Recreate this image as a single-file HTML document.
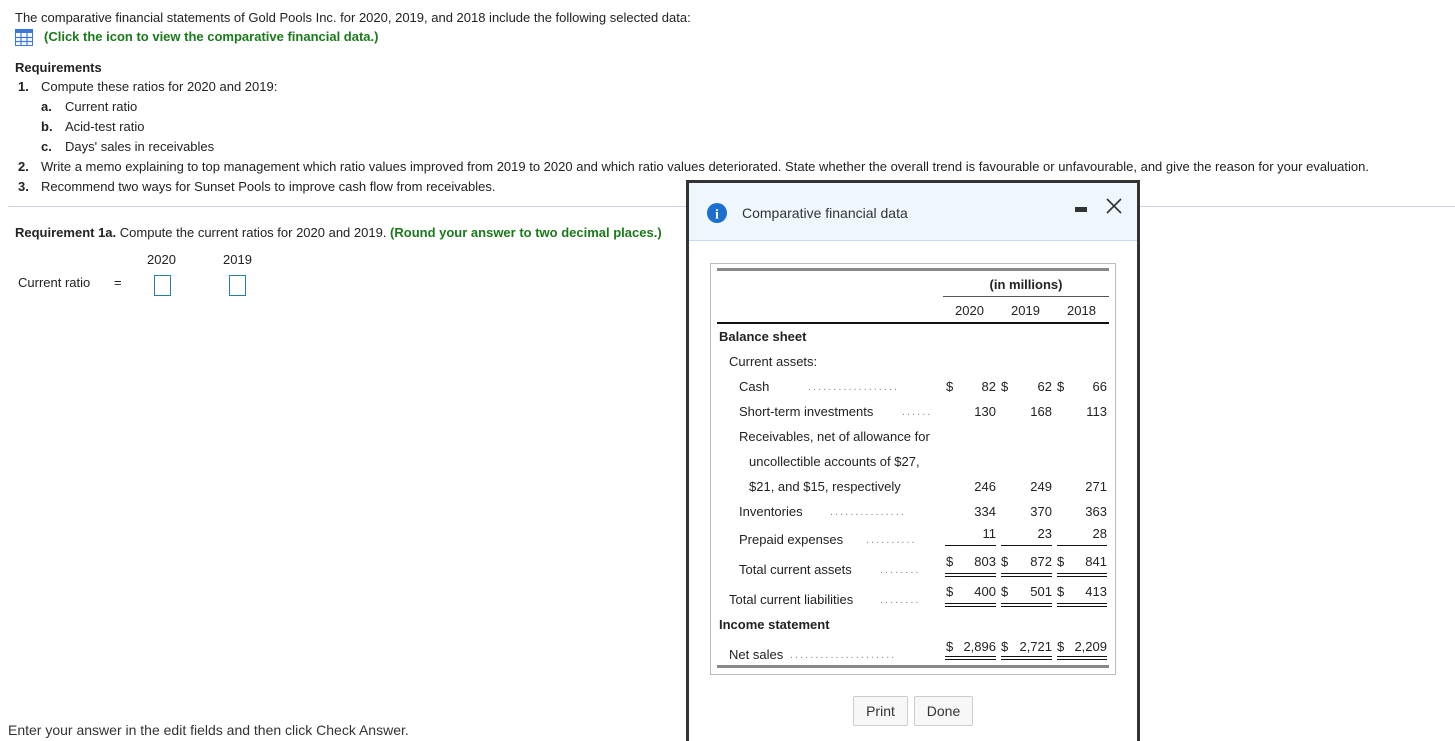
<!DOCTYPE html>
<html><head><meta charset="utf-8"><style>
html,body{margin:0;width:1455px;height:741px;overflow:hidden}
body{background:#fff;font-family:"Liberation Sans",Arial,sans-serif;font-size:13px;color:#222;position:relative}
.a{position:absolute;white-space:nowrap;line-height:16px}
.b{font-weight:bold}
.g{color:#1a7a1a;font-weight:bold}
.r{text-align:right}
.ln{position:absolute;height:0}
.dot{color:#888;letter-spacing:2px;font-size:11px}
.box{position:absolute;width:15px;height:19px;border:1px solid #2a7f9e}
</style></head><body>
<div class="a" style="left:15px;top:10px">The comparative financial statements of Gold Pools Inc. for 2020, 2019, and 2018 include the following selected data:</div>
<svg style="position:absolute;left:15px;top:29px" width="18" height="17"><rect x="0.5" y="0.5" width="17" height="16" fill="#fff" stroke="#3b78d8"/><rect x="0" y="0" width="18" height="4" fill="#3b78d8"/><g stroke="#3b78d8" stroke-width="1.2"><line x1="6" y1="4" x2="6" y2="17"/><line x1="12" y1="4" x2="12" y2="17"/><line x1="0" y1="8.5" x2="18" y2="8.5"/><line x1="0" y1="12.5" x2="18" y2="12.5"/></g></svg>
<div class="a g" style="left:44px;top:29px">(Click the icon to view the comparative financial data.)</div>
<div class="a b" style="left:15px;top:60px">Requirements</div>
<div class="a b" style="left:18px;top:79px">1.</div><div class="a" style="left:41px;top:79px">Compute these ratios for 2020 and 2019:</div>
<div class="a b" style="left:41px;top:99px">a.</div><div class="a" style="left:65px;top:99px">Current ratio</div>
<div class="a b" style="left:41px;top:119px">b.</div><div class="a" style="left:65px;top:119px">Acid-test ratio</div>
<div class="a b" style="left:41px;top:139px">c.</div><div class="a" style="left:65px;top:139px">Days' sales in receivables</div>
<div class="a b" style="left:18px;top:159px">2.</div><div class="a" style="left:41px;top:159px">Write a memo explaining to top management which ratio values improved from 2019 to 2020 and which ratio values deteriorated. State whether the overall trend is favourable or unfavourable, and give the reason for your evaluation.</div>
<div class="a b" style="left:18px;top:179px">3.</div><div class="a" style="left:41px;top:179px">Recommend two ways for Sunset Pools to improve cash flow from receivables.</div>
<div class="ln" style="left:8px;top:206px;width:1447px;border-top:1px solid #ccd3dc"></div>
<div class="a" style="left:15px;top:225px"><b>Requirement 1a.</b> Compute the current ratios for 2020 and 2019. <span class="g">(Round your answer to two decimal places.)</span></div>
<div class="a" style="left:147px;top:252px">2020</div><div class="a" style="left:223px;top:252px">2019</div>
<div class="a" style="left:18px;top:275px">Current ratio</div><div class="a" style="left:114px;top:275px">=</div>
<div class="box" style="left:154px;top:275px"></div><div class="box" style="left:229px;top:275px"></div>
<div class="a" style="left:8px;top:722px;font-size:14px;color:#333">Enter your answer in the edit fields and then click Check Answer.</div>

<div style="position:absolute;left:686px;top:180px;width:448px;height:570px;border:3px solid #333;border-bottom:none;background:#fff">
 <div style="position:absolute;left:0;top:0;width:448px;height:57px;background:#eff6fe;border-bottom:1px solid #c6ddf2"></div>
 <svg style="position:absolute;left:18px;top:20px" width="20" height="20"><circle cx="10" cy="10" r="10" fill="#1a6fd0"/><text x="10" y="15.5" text-anchor="middle" font-family="Liberation Serif,serif" font-weight="bold" font-size="14" fill="#fff">i</text></svg>
 <div class="a" style="left:53px;top:22px;font-size:14px;color:#333">Comparative financial data</div>
 <div style="position:absolute;left:386px;top:24px;width:12px;height:5px;background:#333"></div>
 <svg style="position:absolute;left:416px;top:14px" width="18" height="18"><path d="M2 2L16 16M16 2L2 16" stroke="#333" stroke-width="1.6"/></svg>
</div>
<div style="position:absolute;left:710px;top:263px;width:404px;height:410px;border:1px solid #bbb"></div>
<div class="ln" style="left:717px;top:268px;width:392px;border-top:3px solid #888"></div>
<div class="a b" style="left:943px;top:277px;width:166px;text-align:center">(in millions)</div>
<div class="ln" style="left:943px;top:296px;width:166px;border-top:1px solid #555"></div>
<div class="a" style="left:955px;top:303px">2020</div><div class="a" style="left:1011px;top:303px">2019</div><div class="a" style="left:1067px;top:303px">2018</div>
<div class="ln" style="left:717px;top:322px;width:392px;border-top:2px solid #111"></div>
<div class="a b" style="left:719px;top:329px">Balance sheet</div>
<div class="a" style="left:729px;top:354px">Current assets:</div>
<div class="a" style="left:739px;top:379px">Cash</div><div class="a dot" style="left:808px;top:379px">..................</div>
<div class="a" style="left:739px;top:404px">Short-term investments</div><div class="a dot" style="left:902px;top:404px">......</div>
<div class="a" style="left:739px;top:429px">Receivables, net of allowance for</div>
<div class="a" style="left:749px;top:454px">uncollectible accounts of $27,</div>
<div class="a" style="left:749px;top:479px">$21, and $15, respectively</div>
<div class="a" style="left:739px;top:504px">Inventories</div><div class="a dot" style="left:830px;top:504px">...............</div>
<div class="a" style="left:739px;top:532px">Prepaid expenses</div><div class="a dot" style="left:866px;top:532px">..........</div>
<div class="a" style="left:739px;top:562px">Total current assets</div><div class="a dot" style="left:880px;top:562px">........</div>
<div class="a" style="left:729px;top:592px">Total current liabilities</div><div class="a dot" style="left:880px;top:592px">........</div>
<div class="a b" style="left:719px;top:617px">Income statement</div>
<div class="a" style="left:729px;top:647px">Net sales</div><div class="a dot" style="left:790px;top:647px">.....................</div>
<div class="a" style="left:946px;top:379px">$</div><div class="a r" style="left:946px;top:379px;width:50px">82</div>
<div class="a" style="left:1001px;top:379px">$</div><div class="a r" style="left:1002px;top:379px;width:50px">62</div>
<div class="a" style="left:1057px;top:379px">$</div><div class="a r" style="left:1057px;top:379px;width:50px">66</div>
<div class="a r" style="left:946px;top:404px;width:50px">130</div><div class="a r" style="left:1002px;top:404px;width:50px">168</div><div class="a r" style="left:1057px;top:404px;width:50px">113</div>
<div class="a r" style="left:946px;top:479px;width:50px">246</div><div class="a r" style="left:1002px;top:479px;width:50px">249</div><div class="a r" style="left:1057px;top:479px;width:50px">271</div>
<div class="a r" style="left:946px;top:504px;width:50px">334</div><div class="a r" style="left:1002px;top:504px;width:50px">370</div><div class="a r" style="left:1057px;top:504px;width:50px">363</div>
<div class="a r" style="left:946px;top:526px;width:50px">11</div><div class="a r" style="left:1002px;top:526px;width:50px">23</div><div class="a r" style="left:1057px;top:526px;width:50px">28</div>
<div class="ln" style="left:945px;top:545px;width:51px;border-top:1px solid #111"></div><div class="ln" style="left:1001px;top:545px;width:51px;border-top:1px solid #111"></div><div class="ln" style="left:1057px;top:545px;width:50px;border-top:1px solid #111"></div>
<div class="a" style="left:946px;top:554px">$</div><div class="a r" style="left:946px;top:554px;width:50px">803</div>
<div class="a" style="left:1001px;top:554px">$</div><div class="a r" style="left:1002px;top:554px;width:50px">872</div>
<div class="a" style="left:1057px;top:554px">$</div><div class="a r" style="left:1057px;top:554px;width:50px">841</div>
<div class="ln" style="left:945px;top:573px;width:51px;height:2px;border-top:1px solid #111;border-bottom:1px solid #111"></div><div class="ln" style="left:1001px;top:573px;width:51px;height:2px;border-top:1px solid #111;border-bottom:1px solid #111"></div><div class="ln" style="left:1057px;top:573px;width:50px;height:2px;border-top:1px solid #111;border-bottom:1px solid #111"></div>
<div class="a" style="left:946px;top:584px">$</div><div class="a r" style="left:946px;top:584px;width:50px">400</div>
<div class="a" style="left:1001px;top:584px">$</div><div class="a r" style="left:1002px;top:584px;width:50px">501</div>
<div class="a" style="left:1057px;top:584px">$</div><div class="a r" style="left:1057px;top:584px;width:50px">413</div>
<div class="ln" style="left:945px;top:603px;width:51px;height:2px;border-top:1px solid #111;border-bottom:1px solid #111"></div><div class="ln" style="left:1001px;top:603px;width:51px;height:2px;border-top:1px solid #111;border-bottom:1px solid #111"></div><div class="ln" style="left:1057px;top:603px;width:50px;height:2px;border-top:1px solid #111;border-bottom:1px solid #111"></div>
<div class="a" style="left:946px;top:639px">$</div><div class="a r" style="left:946px;top:639px;width:50px">2,896</div>
<div class="a" style="left:1001px;top:639px">$</div><div class="a r" style="left:1002px;top:639px;width:50px">2,721</div>
<div class="a" style="left:1057px;top:639px">$</div><div class="a r" style="left:1057px;top:639px;width:50px">2,209</div>
<div class="ln" style="left:945px;top:656px;width:51px;height:2px;border-top:1px solid #111;border-bottom:1px solid #111"></div><div class="ln" style="left:1001px;top:656px;width:51px;height:2px;border-top:1px solid #111;border-bottom:1px solid #111"></div><div class="ln" style="left:1057px;top:656px;width:50px;height:2px;border-top:1px solid #111;border-bottom:1px solid #111"></div>
<div class="ln" style="left:717px;top:665px;width:392px;border-top:3px solid #888"></div>
<div style="position:absolute;left:853px;top:696px;width:53px;height:28px;border:1px solid #ccc;border-radius:2px;background:#f7f7f7;font-size:14px;line-height:28px;text-align:center;color:#333">Print</div>
<div style="position:absolute;left:914px;top:696px;width:57px;height:28px;border:1px solid #ccc;border-radius:2px;background:#f7f7f7;font-size:14px;line-height:28px;text-align:center;color:#333">Done</div>
</body></html>
